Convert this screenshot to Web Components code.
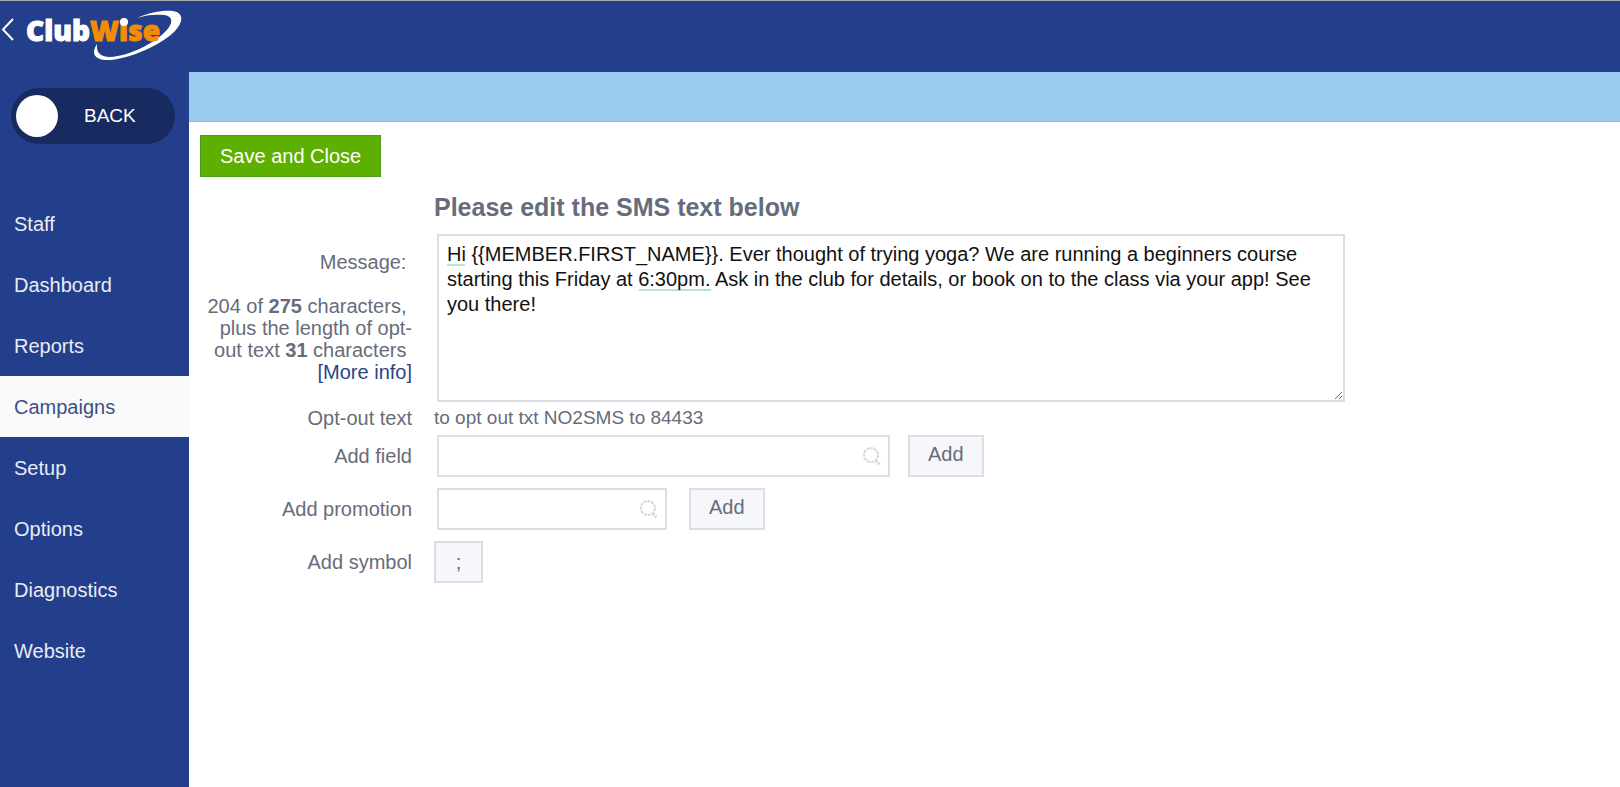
<!DOCTYPE html>
<html lang="en">
<head>
<meta charset="utf-8">
<meta name="viewport" content="width=device-width, initial-scale=1">
<title>ClubWise – Edit SMS</title>
<style>
  :root {
    --blue: #233e8b;
    --navy: #182b60;
    --ink: #666c7b;
    --line: #dbdfe5;
    --panel: #f6f7fb;
    --label-col: 212px;
    --col-gap: 22px;
  }
  html, body { margin: 0; }
  body { font: 20px/22px "Liberation Sans", Arial, sans-serif; color: var(--ink); background: #fff; }
</style>
</head>
<body>
<app-shell>
  <brand-header slot="header"></brand-header>
  <side-nav slot="nav">
    <nav-item href="#staff">Staff</nav-item>
    <nav-item href="#dashboard">Dashboard</nav-item>
    <nav-item href="#reports">Reports</nav-item>
    <nav-item href="#campaigns" current>Campaigns</nav-item>
    <nav-item href="#setup">Setup</nav-item>
    <nav-item href="#options">Options</nav-item>
    <nav-item href="#diagnostics">Diagnostics</nav-item>
    <nav-item href="#website">Website</nav-item>
  </side-nav>
  <sms-editor></sms-editor>
</app-shell>

<script>
const define = (name, html, setup) => {
  const template = document.createElement('template');
  template.innerHTML = html;
  customElements.define(name, class extends HTMLElement {
    constructor() {
      super();
      this.attachShadow({ mode: 'open' }).append(template.content.cloneNode(true));
    }
    connectedCallback() { if (setup) setup(this, this.shadowRoot); }
  });
};

define('app-shell', `
  <style>
    :host { display: grid; grid-template: auto 1fr / 189px 1fr; min-height: 100vh; }
    header { grid-column: 1 / -1; background: var(--blue); border-top: 1px solid #a9aaa8; }
    aside { background: var(--blue); }
    main { min-width: 0; }
    .bar { height: 49px; background: #99cbef; border-bottom: 1px solid #86b9e2; }
  </style>
  <header><slot name="header"></slot></header>
  <aside><slot name="nav"></slot></aside>
  <main><div class="bar"></div><slot></slot></main>
`);

define('brand-header', `
  <style>
    :host { display: block; height: 71px; }
    a { display: block; width: 189px; }
    svg { display: block; }
    text { font: 800 28px "Open Sans", sans-serif; stroke-width: 1px; }
    .club { fill: #fff; stroke: #fff; }
    .wise { fill: #f28c05; stroke: #f28c05; }
  </style>
  <a href="#home" aria-label="ClubWise home">
    <svg width="189" height="70" viewBox="0 1 189 70">
      <path d="M13 19 3 29.500 13 40" fill="none" stroke="#fff" stroke-width="2"/>
      <path fill="#fff" d="M137 18C150 12 164 10 173 11C184 13 184 22 174 32C160 46 125 61 105 60C94 59 91 53 97 44C96 52 100 57 110 57C130 56 154 43 165 32C175 22 172 16 164 15C155 14 145 15 137 18Z"/>
      <text x="26" y="41"><tspan class="club">Club</tspan><tspan class="wise">Wise</tspan></text>
      <circle cx="124" cy="22" r="4" fill="#fff"/>
    </svg>
  </a>
`);

define('side-nav', `
  <style>
    :host { display: block; }
    button { display: flex; align-items: center; width: 164px; height: 56px; margin: 16px 0 49px 11px;
      padding: 0 5px; border: 0; border-radius: 28px; background: var(--navy); color: #fff;
      font: inherit; font-size: 19px; }
    i { width: 42px; height: 42px; margin-right: 26px; border-radius: 50%; background: #fff; }
    nav { display: grid; }
  </style>
  <button type="button"><i></i>BACK</button>
  <nav><slot></slot></nav>
`);

define('nav-item', `
  <style>
    :host { display: block; color: #e9ecf3; }
    :host([current]) { background: #fafafa; color: #3c4f88; }
    a { display: flex; align-items: center; height: 61px; padding-left: 14px; color: inherit; text-decoration: none; }
  </style>
  <a><slot></slot></a>
`, (host, root) => {
  const link = root.querySelector('a');
  link.href = host.getAttribute('href');
  if (host.hasAttribute('current')) link.setAttribute('aria-current', 'page');
});

define('push-button', `
  <style>
    :host { display: block; }
    button { box-sizing: border-box; height: 42px; padding: 0 18px 4px; border: 2px solid var(--line);
      background: var(--panel); color: inherit; font: inherit; }
    :host([kind=primary]) button { padding: 0 19px; border: 1px solid #489e19; background: #5eb000; color: #fff; }
    :host([kind=symbol]) button { width: 49px; padding: 0; }
  </style>
  <button type="button"><slot></slot></button>
`);

define('lookup-row', `
  <style>
    :host { display: grid; grid-template-columns: var(--label-col) 1fr; column-gap: var(--col-gap); align-items: center; }
    label { text-align: right; }
    .controls { display: flex; gap: var(--button-gap, 18px); padding-left: 3px; }
    .box { box-sizing: border-box; display: flex; align-items: center; width: var(--field-width); height: 42px;
      border: 2px solid var(--line); background: #fff; }
    input { flex: 1; min-width: 0; height: 34px; padding: 0 8px; border: 0; outline: 0; background: none; font: inherit; }
    svg { margin-right: 6px; }
  </style>
  <label for="lookup"></label>
  <div class="controls">
    <div class="box">
      <input id="lookup" type="text">
      <svg width="20" height="22" viewBox="0 0 20 22" fill="none" stroke="#d3d8de">
        <circle cx="9" cy="10" r="7" stroke-width="2" stroke-dasharray="3 1"/>
        <path d="m14 16 4 4" stroke-width="3" stroke-dasharray="2 1"/>
      </svg>
    </div>
    <push-button>Add</push-button>
  </div>
`, (host, root) => { root.querySelector('label').textContent = host.getAttribute('label'); });

define('sms-editor', `
  <style>
    :host { display: block; padding: 13px 11px; }
    h1 { margin: 17px 0 14px calc(var(--label-col) + var(--col-gap)); font-size: 25px; line-height: 26px; }
    .row { display: grid; grid-template-columns: var(--label-col) 1fr; column-gap: var(--col-gap); align-items: center; }
    .message { align-items: start; }
    .side { padding-top: 17px; text-align: right; white-space: nowrap; }
    .side p { margin: 22px 0 0; }
    a { color: #2b4583; text-decoration: none; }
    textarea { box-sizing: border-box; display: block; width: calc(100% - 3px); max-width: 908px; height: 168px;
      margin-left: 3px; padding: 6px 8px; border: 2px solid var(--line); outline: 0; color: #111;
      font: inherit; line-height: 25px;
      background:
        linear-gradient(#b3e6cd, #b3e6cd) 8px 28px / 18px 2px no-repeat,
        linear-gradient(#b3e6cd, #b3e6cd) 200px 53px / 72px 2px no-repeat, #fff; }
    .label { text-align: right; }
    .optout { margin: 5px 0 6px; }
    .optout span:last-child { font-size: 19px; }
    lookup-row { margin-bottom: 11px; }
    .field { --field-width: 453px; }
    .promo { --field-width: 230px; --button-gap: 22px; }
  </style>
  <push-button kind="primary">Save and Close</push-button>
  <h1>Please edit the SMS text below</h1>
  <div class="row message">
    <div class="side">
      <label for="message">Message:</label>&nbsp;
      <p>204 of <b>275</b> characters,&nbsp;<br>plus the length of opt-<br>out text <b>31</b> characters&nbsp;<br><a href="#more">[More info]</a></p>
    </div>
    <textarea id="message" spellcheck="false">Hi {{MEMBER.FIRST_NAME}}. Ever thought of trying yoga? We are running a beginners course starting this Friday at 6:30pm. Ask in the club for details, or book on to the class via your app! See you there!</textarea>
  </div>
  <div class="row optout"><span class="label">Opt-out text</span><span>to opt out txt NO2SMS to 84433</span></div>
  <lookup-row class="field" label="Add field"></lookup-row>
  <lookup-row class="promo" label="Add promotion"></lookup-row>
  <div class="row"><span class="label">Add symbol</span><push-button kind="symbol">;</push-button></div>
`);
</script>
</body>
</html>
